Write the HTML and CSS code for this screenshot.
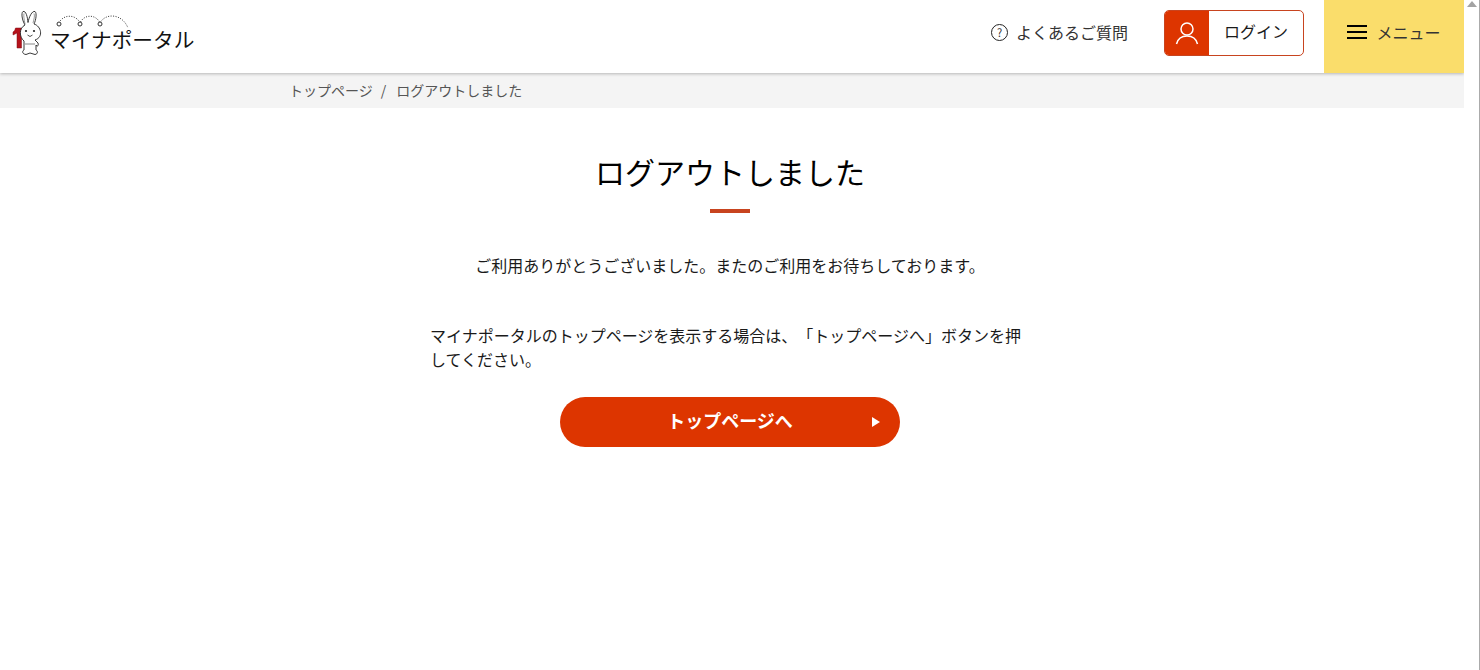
FILE: index.html
```html
<!DOCTYPE html>
<html lang="ja">
<head>
    <title>ログアウトしました | マイナポータル</title>
    <meta charset="utf-8">
    <meta name="viewport" content="width=device-width, initial-scale=1">
    <link rel="stylesheet" href="styles.css">
</head>
<body>
    <div class="page">
        <header class="header">
            <a class="logo" href="#">
                <svg class="logo-mark" width="32" height="46" viewBox="0 0 32 46">
                    <path d="M3.500 18h6v20H5V23L1 25V22C2.500 21 3 20 3.500 18Z" fill="#b5121b" stroke="#7d0d13" stroke-width="0.500"/>
                    <path d="M13 15C10 10 9 3 11 1.500 14 0.500 15.500 7 16 12.500 17 7 20 0.500 23 1.500 25 3 24 10 22 14 29 16 32 27 23 30L26 33C27 36 25 37 24 35L24 40C26 41 26 44 23 44.500L18 43 14 44.500C10 44 10 41 12 40L12 31C7 27 7 18 13 15Z" fill="#fff" stroke="#222" stroke-width="0.900"/>
                    <path d="M13 14C12 9 11.500 6 12 3.500M21 13C22 9 23 6 22 3.500" fill="none" stroke="#555" stroke-width="0.600"/>
                    <circle cx="14" cy="21" r="1.100" fill="#222"/>
                    <circle cx="22" cy="21" r="1.100" fill="#222"/>
                    <path d="M15.500 25q2.500 3 5 0" fill="none" stroke="#222" stroke-width="0.800"/>
                    <path d="M13 34h10" stroke="#555" stroke-width="0.700"/>
                </svg>
                <span class="logo-body">
                    <svg class="logo-dots" width="76" height="16" viewBox="0 0 76 16">
                        <path d="M3 9C7 0 20 0 24 9C28 0 40 0 44 9C49 -1 66 -1 72 14" fill="none" stroke="#333" stroke-width="1" stroke-dasharray="1 1.500"/>
                        <circle cx="3" cy="10" r="2" fill="#fff" stroke="#333"/>
                        <circle cx="24" cy="10" r="2" fill="#fff" stroke="#333"/>
                        <circle cx="44" cy="10" r="2" fill="#fff" stroke="#333"/>
                    </svg>
                    <span class="logo-text">マイナポータル</span>
                </span>
            </a>
            <nav class="header-nav">
                <a class="faq" href="#">
                    <span class="faq-icon">?</span>
                    よくあるご質問
                </a>
                <a class="login" href="#">
                    <span class="login-icon">
                        <svg width="24" height="24" viewBox="0 0 24 24" fill="none" stroke="#fff" stroke-width="1.500">
                            <circle cx="12" cy="8" r="6"/>
                            <path d="M1.500 23C3 17 7 15 12 15S21 17 22.500 23"/>
                        </svg>
                    </span>
                    <span class="login-text">ログイン</span>
                </a>
                <button class="menu" type="button">
                    <span class="menu-bars"><i></i><i></i><i></i></span>
                    メニュー
                </button>
            </nav>
        </header>
        <div class="breadcrumb">
            <div class="breadcrumb-inner">
                <a href="#">トップページ</a>
                <span class="sep">/</span>
                <span>ログアウトしました</span>
            </div>
        </div>
        <main class="main">
            <h1 class="title">ログアウトしました</h1>
            <p class="thanks">ご利用ありがとうございました。またのご利用をお待ちしております。</p>
            <p class="note">マイナポータルのトップページを表示する場合は、「トップページへ」ボタンを押してください。</p>
            <a class="top-btn" href="#">トップページへ<span class="arrow"></span></a>
        </main>
    </div>
    <div class="scrollbar"><span class="up"></span></div>
</body>
</html>
```

FILE: styles.css
```css
* {
    box-sizing: border-box;
}
html, body {
    height: 100%;
}
body {
    margin: 0;
    display: flex;
    overflow: hidden;
    background: #fff;
    color: #1a1a1a;
    font-family: "Noto Sans CJK JP", "Noto Sans", sans-serif;
    font-size: 16px;
    text-spacing-trim: space-all;
}
a {
    color: inherit;
    text-decoration: none;
}
.page {
    flex: 1;
    min-width: 0;
}
.scrollbar {
    width: 16px;
    background: #fff;
    border-right: 1px solid #ababab;
    position: relative;
}
.scrollbar .up {
    position: absolute;
    left: 3px;
    top: 1px;
    border-left: 5px solid transparent;
    border-right: 5px solid transparent;
    border-bottom: 6px solid #a3a3a3;
}

/* header */
.header {
    height: 73px;
    display: flex;
    justify-content: space-between;
    background: #fff;
    box-shadow: 0 1px 3px rgba(0,0,0,.25);
    position: relative;
}
.logo {
    display: flex;
    align-items: flex-start;
    padding: 10px 0 0 12px;
}
.logo-body {
    display: flex;
    flex-direction: column;
    margin-left: 7px;
}
.logo-dots {
    margin: 4px 0 0 5px;
}
.logo-text {
    font-size: 20.700px;
    line-height: 24px;
    margin: -3px 0 0 -1px;
    color: #111;
    white-space: nowrap;
}
.header-nav {
    display: flex;
    align-items: flex-start;
}
.faq {
    display: flex;
    align-items: center;
    gap: 8px;
    height: 46px;
    margin: 9px 36px 0 0;
    color: #333;
}
.faq-icon {
    width: 17px;
    height: 17px;
    border: 1px solid #222;
    border-radius: 50%;
    font-size: 11px;
    line-height: 15px;
    text-align: center;
}
.login {
    display: flex;
    width: 140px;
    height: 46px;
    border: 1px solid #c8441f;
    border-radius: 5px;
    overflow: hidden;
    margin: 10px 20px 0 0;
}
.login-icon {
    width: 44px;
    background: #dd3500;
    display: flex;
    align-items: center;
    justify-content: center;
}
.login-text {
    flex: 1;
    text-align: center;
    line-height: 40px;
}
.menu {
    width: 140px;
    height: 73px;
    border: 0;
    background: #fadd6b;
    color: #333;
    font: inherit;
    display: flex;
    align-items: center;
    justify-content: center;
    gap: 9px;
    padding: 0 0 9px;
}
.menu-bars {
    display: flex;
    flex-direction: column;
    gap: 4px;
    width: 20px;
}
.menu-bars i {
    height: 2px;
    background: #000;
}

/* breadcrumb */
.breadcrumb {
    height: 35px;
    background: #f4f4f4;
    font-size: 14px;
    color: #555;
}
.breadcrumb-inner {
    margin-left: 289px;
    line-height: 35px;
    display: flex;
}
.sep {
    margin: 0 10px 0 8px;
}

/* content */
.main {
    width: 600px;
    margin-left: 430px;
    display: flex;
    flex-direction: column;
    align-items: center;
}
.title {
    margin: 41px 0 0;
    font-size: 30px;
    line-height: 44px;
    font-weight: 400;
    color: #000;
}
.title::after {
    content: "";
    display: block;
    width: 40px;
    height: 4px;
    background: #c8441f;
    margin: 16px auto 0;
}
.thanks {
    margin: 40px 0 0;
    line-height: 24px;
}
.note {
    margin: 46px 0 0;
    line-height: 24px;
    width: 100%;
}
.top-btn {
    width: 340px;
    height: 50px;
    margin-top: 26px;
    border-radius: 25px;
    background: #dd3500;
    color: #fff;
    font-size: 18px;
    font-weight: 700;
    line-height: 46px;
    text-align: center;
    position: relative;
}
.arrow {
    position: absolute;
    right: 20px;
    top: 20px;
    border-left: 8px solid #fff;
    border-top: 5px solid transparent;
    border-bottom: 5px solid transparent;
}
```
